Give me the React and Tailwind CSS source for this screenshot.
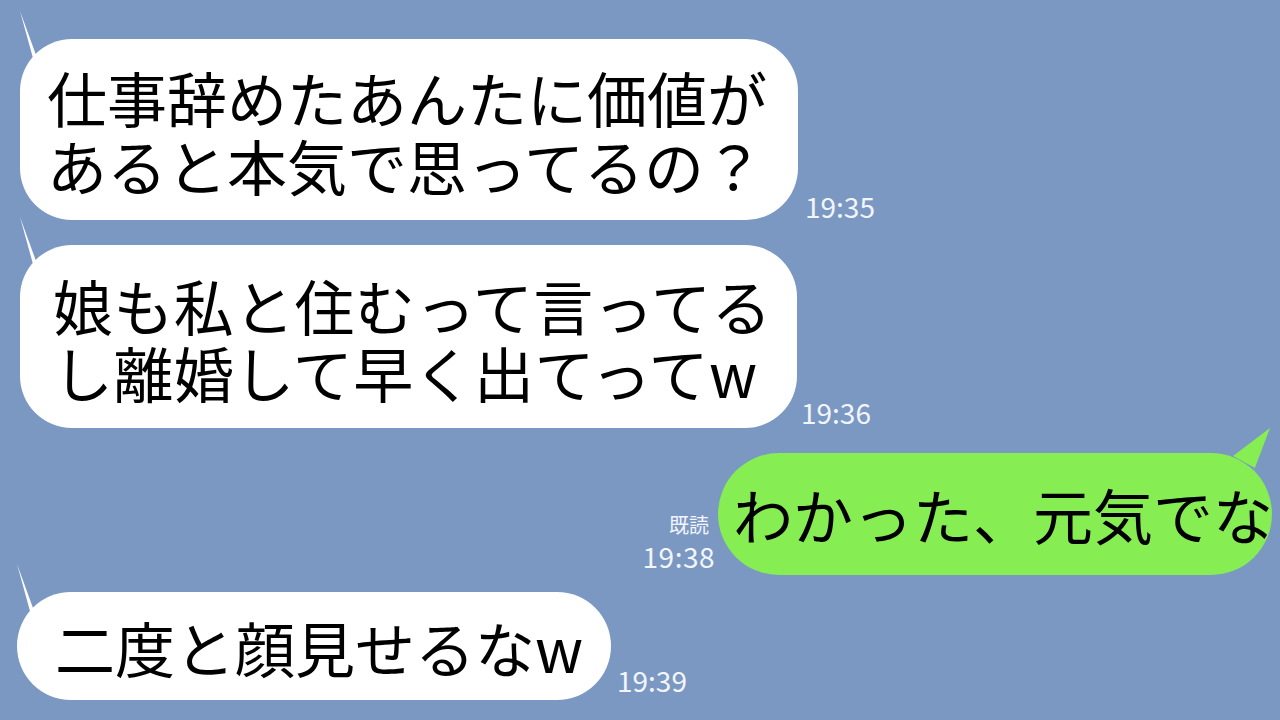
import React from "react";

const font = { fontFamily: '"Noto Sans CJK JP", "Noto Sans", sans-serif' };

function TailLeft() {
  return (
    <svg
      className="absolute left-[-2px] top-[-30px]"
      width="64"
      height="60"
      viewBox="0 0 64 60"
    >
      <polygon points="2,2 18,46 44,34 30,60 18,60" fill="#ffffff" />
    </svg>
  );
}

function TailRight() {
  return (
    <svg
      className="absolute right-[-2px] top-[-27px]"
      width="60"
      height="60"
      viewBox="0 0 60 60"
    >
      <polygon points="56,2 19,30 41,42 34,60" fill="#86ed53" />
    </svg>
  );
}

const stamp = "text-[28px] leading-none text-[#f2f5fa]";

export default function App() {
  return (
    <div
      className="w-[1280px] h-[720px] bg-[#7b98c3] overflow-hidden flex flex-col"
      style={font}
    >
      {/* Row 1 */}
      <div className="flex items-end mt-[39px] ml-[20px] gap-[7px]">
        <div className="relative w-[778px] h-[181px] bg-white rounded-[52px] flex items-center pl-[27px]">
          <TailLeft />
          <div className="relative text-[60px] leading-[68px] text-black whitespace-nowrap pt-[2px]">
            <div>仕事辞めたあんたに価値が</div>
            <div>あると本気で思ってるの？</div>
          </div>
        </div>
        <div className={stamp + " pb-0"}>19:35</div>
      </div>

      {/* Row 2 */}
      <div className="flex items-end mt-[25px] ml-[20px] gap-[4px]">
        <div className="relative w-[777px] h-[183px] bg-white rounded-[52px] flex items-center pl-[33px]">
          <TailLeft />
          <div className="relative text-[60px] leading-[67px] text-black whitespace-nowrap pt-[2px] tracking-[0.4px]">
            <div>娘も私と住むって言ってる</div>
            <div>し離婚して早く出てってw</div>
          </div>
        </div>
        <div className={stamp + " pb-[2px]"}>19:36</div>
      </div>

      {/* Row 3 */}
      <div className="flex items-end justify-end mt-[25px] mr-[8px] gap-[3px]">
        <div className="flex flex-col items-end text-[#f2f5fa] pb-[5px]">
          <div className="text-[20px] leading-none mb-[7px] mr-[6px]">既読</div>
          <div className="text-[28px] leading-none tracking-[0.5px]">19:38</div>
        </div>
        <div className="relative w-[554px] h-[122px] bg-[#86ed53] rounded-[61px] flex items-center pl-[15px]">
          <TailRight />
          <div className="relative text-[60px] leading-[68px] text-black whitespace-nowrap">
            わかった、元気でな
          </div>
        </div>
      </div>

      {/* Row 4 */}
      <div className="flex items-end mt-[17px] ml-[17px] gap-[6px]">
        <div className="relative w-[594px] h-[108px] bg-white rounded-[54px] flex items-center pl-[38px]">
          <TailLeft />
          <div className="relative text-[60px] leading-[68px] text-black whitespace-nowrap pt-[2px]">
            二度と顔見せるなw
          </div>
        </div>
        <div className={stamp + " pb-[6px]"}>19:39</div>
      </div>
    </div>
  );
}
